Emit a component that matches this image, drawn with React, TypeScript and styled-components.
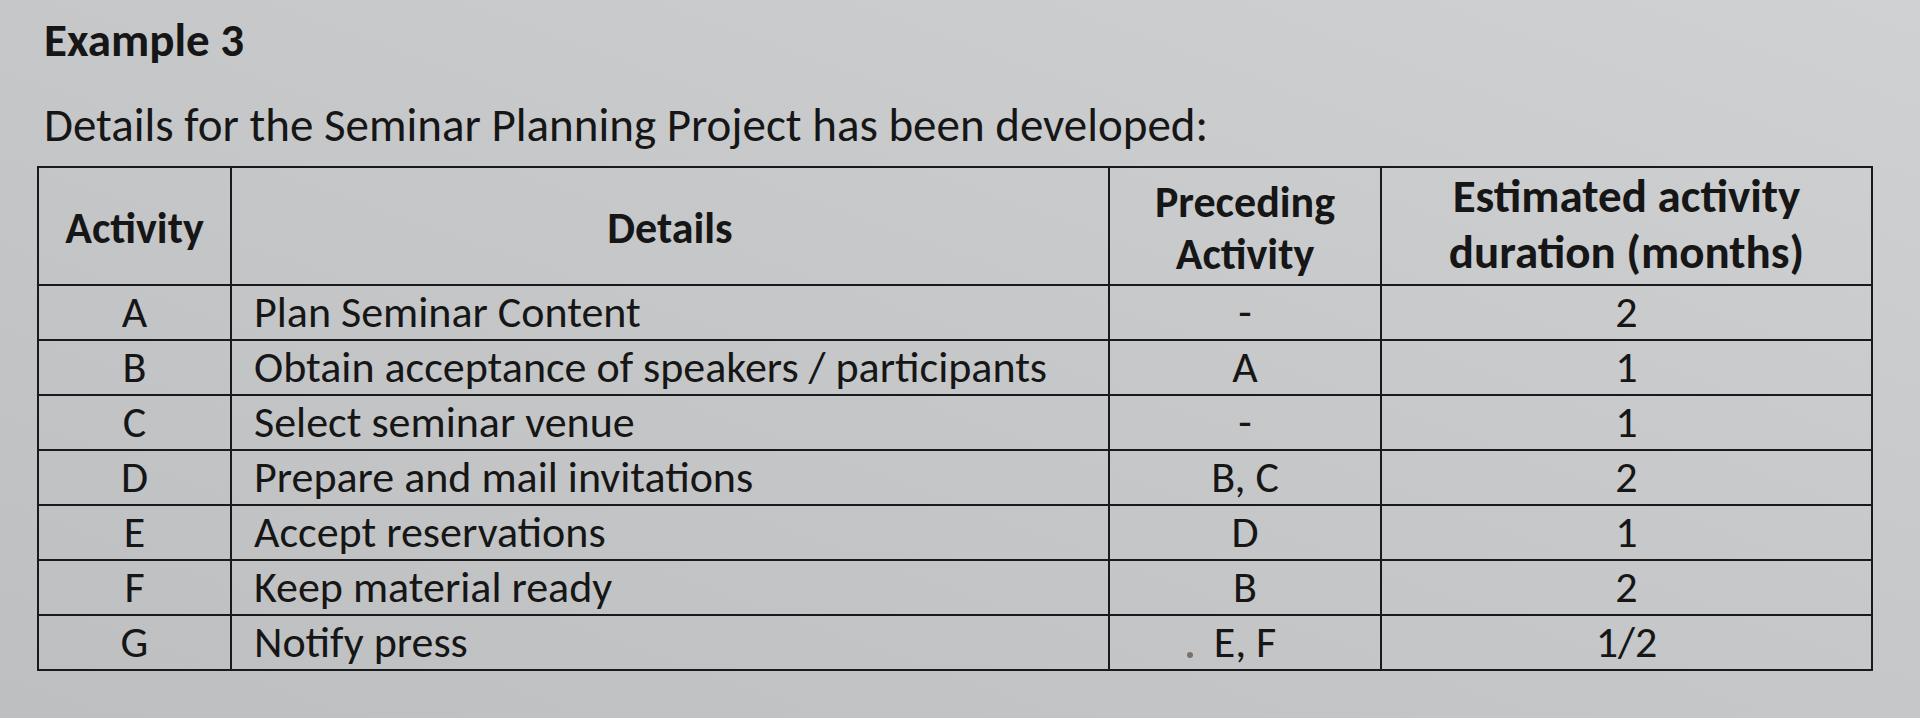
import styled, { createGlobalStyle } from 'styled-components';

const GlobalStyle = createGlobalStyle`
    html, body {
        margin: 0;
        padding: 0;
    }
    body {
        background: linear-gradient(200deg, #d0d1d3 0%, #c7c8ca 45%, #bebfc1 100%);
        min-height: 718px;
        font-family: Carlito, Lato, 'Noto Sans', sans-serif;
        color: #161616;
    }
`;

const Page = styled.div`
    width: 1920px;
    height: 718px;
    box-sizing: border-box;
    padding: 14px 0 0 37px;
    overflow: hidden;
`;

const Heading = styled.h1`
    margin: 0 0 0 7px;
    font-size: 47px;
    font-weight: 700;
    line-height: 52px;
`;

const Intro = styled.p`
    margin: 32px 0 0 7px;
    font-size: 47px;
    line-height: 54px;
`;

const Table = styled.table`
    margin-top: 14px;
    width: 1834px;
    border-collapse: collapse;
    table-layout: fixed;
    border: 2px solid #1a1a1a;
`;

const HeadCell = styled.th<{ $large?: boolean }>`
    height: 111px;
    padding: ${(p) => (p.$large ? '0 0 4px' : '4px 0 0')};
    border: 2px solid #1a1a1a;
    font-size: ${(p) => (p.$large ? '47px' : '44px')};
    font-weight: 700;
    line-height: ${(p) => (p.$large ? '56px' : '52px')};
    text-align: center;
    vertical-align: middle;
`;

const Cell = styled.td<{ $align?: 'left' | 'center' }>`
    position: relative;
    height: 53px;
    padding: 0 0 0 ${(p) => (p.$align === 'left' ? '22px' : '0')};
    border: 2px solid #1a1a1a;
    font-size: 44px;
    line-height: 53px;
    text-align: ${(p) => p.$align ?? 'center'};
    vertical-align: middle;
    white-space: nowrap;
`;

const Speck = styled.span`
    position: absolute;
    left: 77px;
    top: 36px;
    width: 6px;
    height: 6px;
    border-radius: 50%;
    background: #7d7166;
`;

const rows = [
    { id: 'A', details: 'Plan Seminar Content', pre: '-', dur: '2' },
    { id: 'B', details: 'Obtain acceptance of speakers / participants', pre: 'A', dur: '1' },
    { id: 'C', details: 'Select seminar venue', pre: '-', dur: '1' },
    { id: 'D', details: 'Prepare and mail invitations', pre: 'B, C', dur: '2' },
    { id: 'E', details: 'Accept reservations', pre: 'D', dur: '1' },
    { id: 'F', details: 'Keep material ready', pre: 'B', dur: '2' },
    { id: 'G', details: 'Notify press', pre: 'E, F', dur: '1/2' },
];

export default function App() {
    return (
        <>
            <GlobalStyle />
            <Page>
                <Heading>Example 3</Heading>
                <Intro>Details for the Seminar Planning Project has been developed:</Intro>
                <Table>
                    <colgroup>
                        <col style={{ width: 193 }} />
                        <col style={{ width: 878 }} />
                        <col style={{ width: 272 }} />
                        <col style={{ width: 491 }} />
                    </colgroup>
                    <thead>
                        <tr>
                            <HeadCell>Activity</HeadCell>
                            <HeadCell>Details</HeadCell>
                            <HeadCell>
                                Preceding
                                <br />
                                Activity
                            </HeadCell>
                            <HeadCell $large>
                                Estimated activity
                                <br />
                                duration (months)
                            </HeadCell>
                        </tr>
                    </thead>
                    <tbody>
                        {rows.map((r) => (
                            <tr key={r.id}>
                                <Cell>{r.id}</Cell>
                                <Cell $align="left">{r.details}</Cell>
                                <Cell>
                                    {r.id === 'G' && <Speck />}
                                    {r.pre}
                                </Cell>
                                <Cell>{r.dur}</Cell>
                            </tr>
                        ))}
                    </tbody>
                </Table>
            </Page>
        </>
    );
}
